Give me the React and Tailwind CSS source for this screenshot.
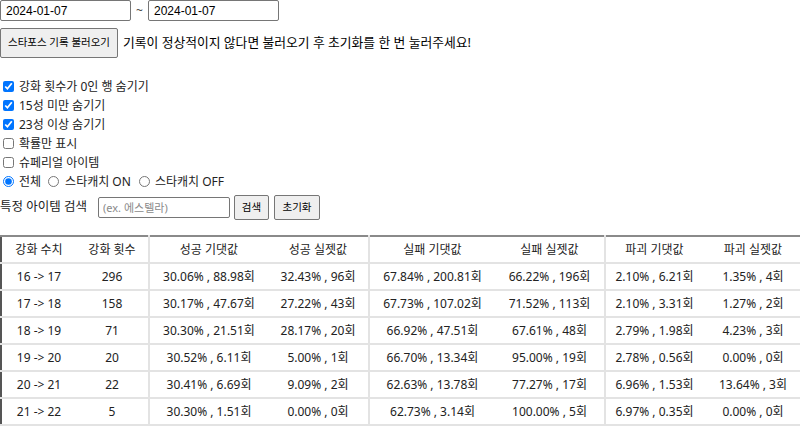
import React from 'react';

const rows = [
  ['16 -> 17', '296', '30.06% , 88.98회', '32.43% , 96회', '67.84% , 200.81회', '66.22% , 196회', '2.10% , 6.21회', '1.35% , 4회'],
  ['17 -> 18', '158', '30.17% , 47.67회', '27.22% , 43회', '67.73% , 107.02회', '71.52% , 113회', '2.10% , 3.31회', '1.27% , 2회'],
  ['18 -> 19', '71', '30.30% , 21.51회', '28.17% , 20회', '66.92% , 47.51회', '67.61% , 48회', '2.79% , 1.98회', '4.23% , 3회'],
  ['19 -> 20', '20', '30.52% , 6.11회', '5.00% , 1회', '66.70% , 13.34회', '95.00% , 19회', '2.78% , 0.56회', '0.00% , 0회'],
  ['20 -> 21', '22', '30.41% , 6.69회', '9.09% , 2회', '62.63% , 13.78회', '77.27% , 17회', '6.96% , 1.53회', '13.64% , 3회'],
  ['21 -> 22', '5', '30.30% , 1.51회', '0.00% , 0회', '62.73% , 3.14회', '100.00% , 5회', '6.97% , 0.35회', '0.00% , 0회'],
];

const headers = ['강화 수치', '강화 횟수', '성공 기댓값', '성공 실젯값', '실패 기댓값', '실패 실젯값', '파괴 기댓값', '파괴 실젯값'];
const widths = ['w-[75px]', 'w-[73px]', 'w-[119px]', 'w-[101px]', 'w-[126px]', 'w-[110px]', 'w-[98px]', 'w-[100px]'];
const groupEnd = [false, true, false, true, false, true, false, false];

const checks = [
  ['강화 횟수가 0인 행 숨기기', true],
  ['15성 미만 숨기기', true],
  ['23성 이상 숨기기', true],
  ['확률만 표시', false],
  ['슈페리얼 아이템', false],
];

const btn = 'h-[25px] bg-[#efefef] border border-[#767676] rounded-[2px] text-[10.5px] text-black whitespace-nowrap';

export default function App() {
  return (
    <div className="w-[800px] h-[435px] overflow-hidden bg-white text-[13px] text-[#222] font-['Noto_Sans','Noto_Sans_CJK_KR',sans-serif]">
      <div className="flex items-center h-[21px]">
        <input
          type="text"
          defaultValue="2024-01-07"
          className="w-[131px] h-[21px] border border-[#767676] rounded-[2px] px-[5px] text-[12px] text-black font-['Liberation_Sans',sans-serif] outline-none"
        />
        <span className="w-[17px] text-center text-[12px] text-[#444]">~</span>
        <input
          type="text"
          defaultValue="2024-01-07"
          className="w-[131px] h-[21px] border border-[#767676] rounded-[2px] px-[5px] text-[12px] text-black font-['Liberation_Sans',sans-serif] outline-none"
        />
      </div>

      <div className="flex items-center mt-[7px] h-[30px]">
        <button className="h-[30px] w-[118px] bg-[#efefef] border border-[#767676] rounded-[2px] text-[10.5px] text-black whitespace-nowrap">
          스타포스 기록 불러오기
        </button>
        <span className="ml-[5px] text-[12.8px] text-black">기록이 정상적이지 않다면 불러오기 후 초기화를 한 번 눌러주세요!</span>
      </div>

      <div className="mt-[19px] flex flex-col">
        {checks.map(([label, on]) => (
          <label key={label} className="flex items-center h-[19px]">
            <input type="checkbox" defaultChecked={on} className="w-[11px] h-[11px] ml-[3px] mr-[5px]" />
            <span className="text-[12px]">{label}</span>
          </label>
        ))}
        <div className="flex items-center h-[19px] text-[12px]">
          <input type="radio" name="sc" defaultChecked className="w-[11px] h-[11px] ml-[3px] mr-[5px]" />
          <span>전체</span>
          <input type="radio" name="sc" className="w-[11px] h-[11px] ml-[7px] mr-[6px]" />
          <span>스타캐치 ON</span>
          <input type="radio" name="sc" className="w-[11px] h-[11px] ml-[8px] mr-[5px]" />
          <span>스타캐치 OFF</span>
        </div>
      </div>

      <div className="flex items-center mt-[4px] h-[25px]">
        <span className="text-[12.5px] mr-[11px]">특정 아이템 검색</span>
        <input
          type="text"
          placeholder="(ex. 에스텔라)"
          className="w-[132px] h-[21px] border border-[#767676] rounded-[2px] px-[4px] text-[11px] placeholder:text-[#8a8a8a] outline-none"
        />
        <button className={`${btn} ml-[4px] w-[35px]`}>검색</button>
        <button className={`${btn} ml-[5px] w-[46px]`}>초기화</button>
      </div>

      <table className="mt-[15px] w-[802px] border-collapse table-fixed border-t-2 border-t-[#8a8a8a] border-l-2 border-l-[#555] text-[12px]">
        <thead>
          <tr className="h-[27px] border-b-2 border-[#e3e3e3]">
            {headers.map((h, i) => (
              <th
                key={h}
                className={`${widths[i]} font-normal text-center ${groupEnd[i] ? 'border-r-2 border-r-[#e3e3e3]' : ''}`}
              >
                {h}
              </th>
            ))}
          </tr>
        </thead>
        <tbody>
          {rows.map((r) => (
            <tr key={r[0]} className="h-[27px] border-b-2 border-[#e3e3e3]">
              {r.map((c, i) => (
                <td key={i} className={`text-center ${groupEnd[i] ? 'border-r-2 border-r-[#e3e3e3]' : ''}`}>
                  {c}
                </td>
              ))}
            </tr>
          ))}
        </tbody>
      </table>
    </div>
  );
}
